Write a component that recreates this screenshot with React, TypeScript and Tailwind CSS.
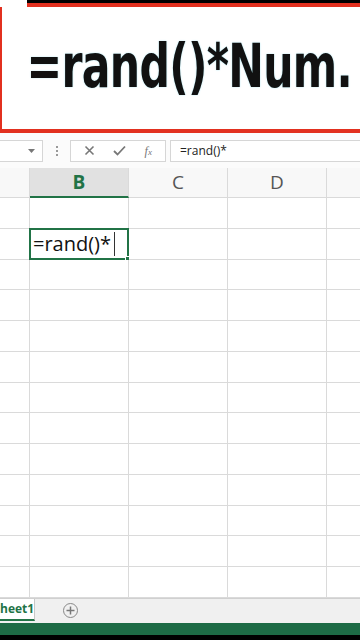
const cols = [
  { key: "A", w: "w-[30px]" },
  { key: "B", w: "w-[99px]" },
  { key: "C", w: "w-[99px]" },
  { key: "D", w: "w-[99px]" },
  { key: "E", w: "flex-1" },
];

function Cell({ w, last, children, selected }: { w: string; last?: boolean; children?: React.ReactNode; selected?: boolean }) {
  return (
    <div className={`${w} relative h-full shrink-0 border-b border-[#dadada] ${last ? "" : "border-r"}`}>
      {selected && (
        <div className="absolute -top-px -left-px right-[-1px] bottom-[-1px] flex items-center border-2 border-[#217346] pl-[2px]">
          {children}
          <span className="absolute -right-[3px] -bottom-[3px] h-[5px] w-[5px] border border-white bg-[#217346]" />
        </div>
      )}
    </div>
  );
}

export default function App() {
  const rows = Array.from({ length: 13 }, (_, i) => i);

  return (
    <div
      className="flex h-[640px] w-[360px] flex-col overflow-hidden bg-white"
      style={{ fontFamily: "'Open Sans', 'Liberation Sans', sans-serif" }}
    >
      {/* banner */}
      <div className="flex h-[133px] shrink-0 flex-col">
        <div className="flex h-[7px] shrink-0">
          <div className="w-[27px] bg-white" />
          <div className="flex flex-1 flex-col">
            <div className="h-[3px] bg-black" />
            <div className="flex-1 bg-[#e2301f]" />
          </div>
        </div>
        <div className="flex flex-1 items-center justify-center overflow-hidden border-b-[4px] border-l-[2px] border-[#e2301f] bg-white pb-[4px] pl-[16px]">
          <span
            className="inline-block origin-center scale-x-[0.71] whitespace-nowrap text-[60px] font-bold leading-none tracking-[-1px] text-[#111]"
            style={{ fontFamily: "'DejaVu Sans', sans-serif", textShadow: "0 0 2px #9fe3f0" }}
          >
            =rand()*Num.
          </span>
        </div>
      </div>

      {/* formula bar */}
      <div className="flex h-[35px] shrink-0 items-center bg-[#fbfbfb] text-[#555]">
        <div className="flex h-[22px] w-[43px] items-center justify-end border border-l-0 border-[#d6d6d6] bg-white pr-[7px]">
          <svg width="7" height="4" viewBox="0 0 7 4">
            <path d="M0 0h7L3.5 4z" fill="#777" />
          </svg>
        </div>
        <div className="flex w-[27px] flex-col items-center gap-[2px]">
          <span className="h-[2px] w-[2px] bg-[#999]" />
          <span className="h-[2px] w-[2px] bg-[#999]" />
          <span className="h-[2px] w-[2px] bg-[#999]" />
        </div>
        <div className="flex h-[22px] w-[96px] items-center justify-around border border-[#d6d6d6] bg-white px-[4px]">
          <svg width="11" height="11" viewBox="0 0 11 11">
            <path d="M1.5 1.5l8 8M9.5 1.5l-8 8" stroke="#777" strokeWidth="1.6" />
          </svg>
          <svg width="13" height="11" viewBox="0 0 13 11">
            <path d="M1 6l3.5 3.5L12 1.5" stroke="#777" strokeWidth="1.8" fill="none" />
          </svg>
          <span className="text-[12px] italic text-[#777]" style={{ fontFamily: "'Liberation Serif', serif" }}>
            f<span className="text-[9px]">x</span>
          </span>
        </div>
        <div className="ml-[4px] flex h-[22px] flex-1 items-center border border-r-0 border-[#d6d6d6] bg-white pl-[9px] text-[12px] text-[#222]">
          =rand()*
        </div>
      </div>

      {/* column headers */}
      <div className="flex h-[30px] shrink-0 bg-[#f8f8f8]">
        {cols.map((c) => (
          <div
            key={c.key}
            className={`${c.w} flex h-full shrink-0 items-center justify-center text-[19px] ${
              c.key === "E" ? "" : "border-r border-[#dadada]"
            } ${
              c.key === "B"
                ? "border-b-2 border-b-[#217346] bg-[#e1e1e1] font-bold text-[#217346]"
                : "border-b border-b-[#dadada] text-[#555]"
            }`}
          >
            {c.key === "A" || c.key === "E" ? "" : c.key}
          </div>
        ))}
      </div>

      {/* grid */}
      <div className="flex h-[400px] shrink-0 flex-col">
        {rows.map((r) => (
          <div key={r} className="flex flex-1">
            {cols.map((c) => (
              <Cell key={c.key} w={c.w} last={c.key === "E"} selected={r === 1 && c.key === "B"}>
                <span className="text-[20px] leading-none text-[#111]">=rand()*</span>
                <span className="ml-[3px] h-[24px] w-px bg-[#333]" />
              </Cell>
            ))}
          </div>
        ))}
      </div>

      {/* sheet tabs */}
      <div className="flex h-[25px] shrink-0 items-start border-t border-[#d0d0d0] bg-[#f0f0f0]">
        <div className="flex h-[22px] w-[35px] items-center justify-start border-r border-b-2 border-r-[#c8c8c8] border-b-[#217346] bg-white text-[12px] font-bold text-[#217346]">
          <span className="whitespace-nowrap">heet1</span>
        </div>
        <div className="ml-[28px] mt-[4px] flex h-[15px] w-[15px] items-center justify-center rounded-full border-[1.5px] border-[#888]">
          <svg width="9" height="9" viewBox="0 0 9 9">
            <path d="M4.5 0.5v8M0.5 4.5h8" stroke="#777" strokeWidth="1.5" />
          </svg>
        </div>
      </div>

      {/* status bar */}
      <div className="h-[12px] shrink-0 bg-[#1d6b45]" />
      <div className="flex-1 bg-black" />
    </div>
  );
}
